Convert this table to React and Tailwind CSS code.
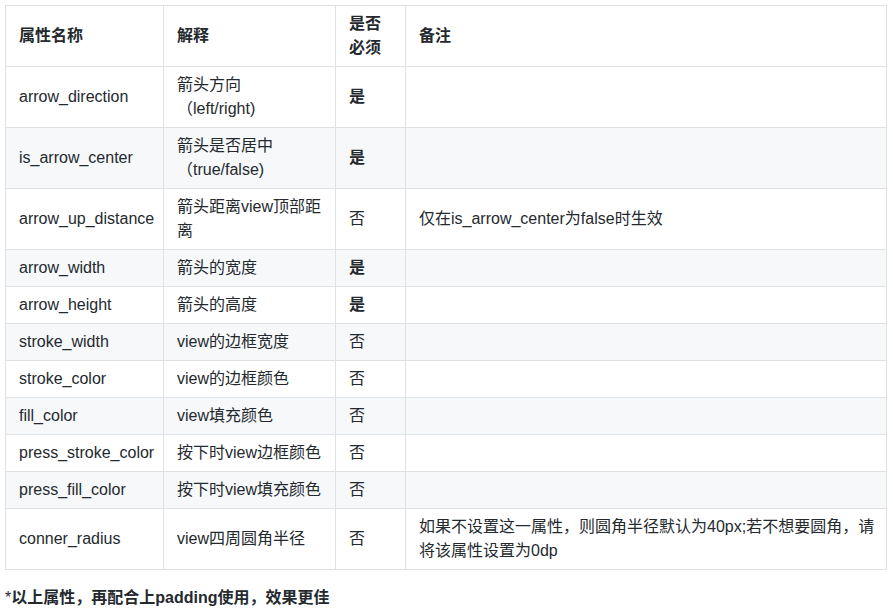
import React from 'react';

const rows = [
  ['arrow_direction', <>箭头方向<br />（left/right)</>, '是', ''],
  ['is_arrow_center', '箭头是否居中（true/false)', '是', ''],
  ['arrow_up_distance', '箭头距离view顶部距离', '否', '仅在is_arrow_center为false时生效'],
  ['arrow_width', '箭头的宽度', '是', ''],
  ['arrow_height', '箭头的高度', '是', ''],
  ['stroke_width', 'view的边框宽度', '否', ''],
  ['stroke_color', 'view的边框颜色', '否', ''],
  ['fill_color', 'view填充颜色', '否', ''],
  ['press_stroke_color', '按下时view边框颜色', '否', ''],
  ['press_fill_color', '按下时view填充颜色', '否', ''],
  [
    'conner_radius',
    'view四周圆角半径',
    '否',
    <>
      <span className="whitespace-nowrap">如果不设置这一属性，则圆角半径默认为40px;若不想要圆角，请</span>
      <br />
      将该属性设置为0dp
    </>,
  ],
];

const cell = 'border border-[#dfe2e5] px-[13px] py-[6px] text-left align-middle';

export default function App() {
  return (
    <div
      className="bg-white p-[5px] text-[16px] leading-[24px] text-[#24292e]"
      style={{ fontFamily: '"Liberation Sans", "Noto Sans CJK SC", sans-serif' }}
    >
      <table className="w-[882px] table-fixed border-collapse">
        <colgroup>
          <col className="w-[158px]" />
          <col className="w-[172px]" />
          <col className="w-[70px]" />
          <col />
        </colgroup>
        <thead>
          <tr className="bg-white">
            <th className={`${cell} font-bold`}>属性名称</th>
            <th className={`${cell} font-bold`}>解释</th>
            <th className={`${cell} font-bold`}>是否必须</th>
            <th className={`${cell} font-bold`}>备注</th>
          </tr>
        </thead>
        <tbody>
          {rows.map((r, i) => (
            <tr key={r[0]} className={i % 2 === 1 ? 'bg-[#f6f8fa]' : 'bg-white'}>
              <td className={cell}>{r[0]}</td>
              <td className={cell}>{r[1]}</td>
              <td className={`${cell} ${r[2] === '是' ? 'font-bold' : ''}`}>{r[2]}</td>
              <td className={`${cell} overflow-visible`}>{r[3]}</td>
            </tr>
          ))}
        </tbody>
      </table>
      <p className="mt-[16px]">
        *<strong className="font-bold">以上属性，再配合上padding使用，效果更佳</strong>
      </p>
    </div>
  );
}
